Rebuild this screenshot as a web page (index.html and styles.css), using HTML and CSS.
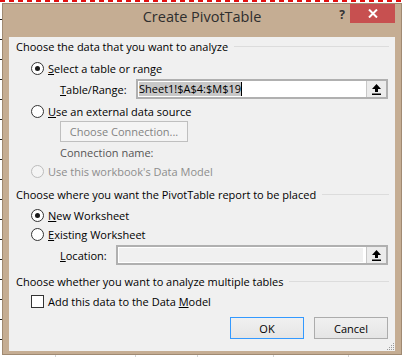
FILE: index.html
```html
<!DOCTYPE html>
<html lang="en">
  <head>
    <meta charset="UTF-8" />
    <title>Create PivotTable</title>
    <link rel="stylesheet" href="styles.css">
  </head>
  <body>
    <div class="sheet">
      <div class="window">
        <div class="titlebar">
          <span></span>
          <span class="title">Create PivotTable</span>
          <div class="caption-buttons">
            <span class="help">?</span>
            <span class="close">
              <svg width="10" height="9" viewBox="0 0 10 9"><path d="M1 0.5 L9 8.5 M9 0.5 L1 8.5" stroke="#fff" stroke-width="2"/></svg>
            </span>
          </div>
        </div>

        <div class="client">
          <!-- Source -->
          <div class="group-head mt4"><span>Choose the data that you want to analyze</span><i></i></div>
          <div class="option mt4"><span class="radio checked"></span><span><u>S</u>elect a table or range</span></div>
          <div class="field-row mt2">
            <span class="field-label w76"><u>T</u>able/Range:</span>
            <div class="ref-edit">
              <div class="ref-text"><span class="selected">Sheet1!$A$4:$M$19</span><span class="caret"></span></div>
              <span class="collapse-btn">
                <svg width="9" height="11" viewBox="0 0 9 11"><path d="M4.5 0 L9 5 L6 5 L6 8 L3 8 L3 5 L0 5 Z" fill="#000"/><rect x="0" y="9.5" width="9" height="1.5" fill="#000"/></svg>
              </span>
            </div>
          </div>
          <div class="option mt3"><span class="radio"></span><span><u>U</u>se an external data source</span></div>
          <div class="indent mt1"><button class="btn disabled w128">Choose Connection...</button></div>
          <div class="indent note mt2">Connection name:</div>
          <div class="option disabled"><span class="radio"></span><span>Use this workbook's Data Model</span></div>

          <!-- Destination -->
          <div class="group-head mt5"><span>Choose where you want the PivotTable report to be placed</span><i></i></div>
          <div class="option mt3"><span class="radio checked"></span><span><u>N</u>ew Worksheet</span></div>
          <div class="option mt1"><span class="radio"></span><span><u>E</u>xisting Worksheet</span></div>
          <div class="field-row mt2">
            <span class="field-label w56"><u>L</u>ocation:</span>
            <div class="ref-edit disabled">
              <div class="ref-text"></div>
              <span class="collapse-btn">
                <svg width="9" height="11" viewBox="0 0 9 11"><path d="M4.5 0 L9 5 L6 5 L6 8 L3 8 L3 5 L0 5 Z" fill="#000"/><rect x="0" y="9.5" width="9" height="1.5" fill="#000"/></svg>
              </span>
            </div>
          </div>

          <!-- Data model -->
          <div class="group-head mt7"><span>Choose whether you want to analyze multiple tables</span><i></i></div>
          <div class="option mt2"><span class="checkbox"></span><span>Add this data to the Data <u>M</u>odel</span></div>

          <div class="actions mt7">
            <button class="btn default">OK</button>
            <button class="btn">Cancel</button>
          </div>

          <svg class="grip" width="9" height="9" viewBox="0 0 9 9">
            <rect x="7" y="1" width="1" height="1" fill="#9a9a9a"/>
            <rect x="5" y="3" width="1" height="1" fill="#9a9a9a"/><rect x="7" y="3" width="1" height="1" fill="#9a9a9a"/>
            <rect x="3" y="5" width="1" height="1" fill="#9a9a9a"/><rect x="5" y="5" width="1" height="1" fill="#9a9a9a"/><rect x="7" y="5" width="1" height="1" fill="#9a9a9a"/>
            <rect x="1" y="7" width="1" height="1" fill="#9a9a9a"/><rect x="3" y="7" width="1" height="1" fill="#9a9a9a"/><rect x="5" y="7" width="1" height="1" fill="#9a9a9a"/><rect x="7" y="7" width="1" height="1" fill="#9a9a9a"/>
          </svg>
        </div>
      </div>
    </div>
  </body>
</html>
```

FILE: styles.css
```css
html, body {
  margin: 0;
  padding: 0;
  background: #fff;
}

/* spreadsheet behind the dialog: copy marquee, row ticks, column lines */
.sheet {
  width: 402px;
  height: 357px;
  overflow: hidden;
  padding-top: 3px;
  box-sizing: border-box;
  font-family: "Open Sans", sans-serif;
  font-size: 11px;
  color: #000;
  background:
    repeating-linear-gradient(90deg, #e01010 0 5px, #fff 5px 9px) top left / 100% 2px no-repeat,
    repeating-linear-gradient(180deg, #fff 0 19px, #222 19px 20px) top left / 2px 100% no-repeat,
    linear-gradient(90deg, transparent 55px, #d4d4d4 55px 56px, transparent 56px 135px, #d4d4d4 135px 136px, transparent 136px 197px, #d4d4d4 197px 198px, transparent 198px 273px, #d4d4d4 273px 274px, transparent 274px 348px, #d4d4d4 348px 349px, transparent 349px) bottom left / 100% 3px no-repeat,
    #fff;
}

/* Window frame */
.window {
  position: relative;
  margin-left: 2px;
  width: 400px;
  height: 352px;
  box-sizing: border-box;
  background: #c5ad93;
  border: 1px solid #a08a72;
  padding: 0 6px 7px 6px;
}

.titlebar {
  height: 29px;
  display: grid;
  grid-template-columns: 1fr auto 1fr;
  align-items: start;
}

.title {
  font-size: 14.5px;
  color: #2e2e2e;
  line-height: 20px;
  padding-top: 3px;
}

.caption-buttons {
  display: flex;
  justify-content: flex-end;
  align-items: flex-start;
}

.help {
  font-weight: bold;
  font-size: 12px;
  color: #333;
  margin-top: 2px;
  margin-right: 5px;
}

.close {
  width: 45px;
  height: 19px;
  background: #c75050;
  display: flex;
  align-items: center;
  justify-content: center;
}

/* Client area */
.client {
  position: relative;
  height: 314px;
  box-sizing: border-box;
  background: #f0f0f0;
  padding: 0 7px;
}

.mt1 { margin-top: 1px; }
.mt2 { margin-top: 2px; }
.mt3 { margin-top: 3px; }
.mt4 { margin-top: 4px; }
.mt5 { margin-top: 5px; }
.mt7 { margin-top: 7px; }

.group-head {
  height: 18px;
  display: flex;
  align-items: center;
  gap: 6px;
  margin-right: -1px;
}

.group-head i {
  flex: 1;
  height: 1px;
  background: #dcdcdc;
}

.option {
  height: 18px;
  display: flex;
  align-items: center;
  gap: 4px;
  margin-left: 15px;
}

.option.disabled {
  color: #8d8d8d;
}

.radio {
  width: 13px;
  height: 13px;
  box-sizing: border-box;
  border: 1px solid #333;
  border-radius: 50%;
  background: #fff;
  display: flex;
  align-items: center;
  justify-content: center;
}

.radio.checked::after {
  content: "";
  width: 5px;
  height: 5px;
  border-radius: 50%;
  background: #1a1a1a;
}

.option.disabled .radio {
  border-color: #bcbcbc;
  background: #f4f4f4;
}

.checkbox {
  width: 13px;
  height: 13px;
  box-sizing: border-box;
  border: 1px solid #333;
  background: #fff;
}

.indent {
  margin-left: 44px;
}

.note {
  height: 18px;
  line-height: 18px;
  color: #555;
}

.field-row {
  height: 20px;
  display: flex;
  align-items: center;
  margin-left: 44px;
}

.w76 { width: 76px; }
.w56 { width: 56px; }

.ref-edit {
  flex: 1;
  height: 20px;
  box-sizing: border-box;
  border: 2px solid #b0b0b0;
  background: #fff;
  display: flex;
}

.ref-text {
  flex: 1;
  display: flex;
  align-items: center;
  padding-left: 1px;
}

.selected {
  background: #c8c8c8;
  line-height: 14px;
}

.caret {
  width: 1px;
  height: 14px;
  background: #000;
}

.ref-edit.disabled .ref-text {
  background: #f0f0f0;
  margin: 1px 3px 1px 1px;
}

.collapse-btn {
  width: 19px;
  background: #ececec;
  border-left: 1px solid #c8c8c8;
  display: flex;
  align-items: center;
  justify-content: center;
}

/* Buttons */
.btn {
  height: 22px;
  width: 74px;
  box-sizing: border-box;
  font: inherit;
  color: #000;
  background: linear-gradient(#f0f0f0, #e5e5e5);
  border: 1px solid #acacac;
  padding: 0;
}

.btn.default {
  border-color: #3399ff;
}

.btn.disabled {
  height: 21px;
  color: #838383;
  background: #f4f4f4;
  border-color: #bfbfbf;
}

.w128 { width: 128px; }

.actions {
  display: flex;
  justify-content: flex-end;
  gap: 10px;
}

.grip {
  position: absolute;
  right: 0;
  bottom: 0;
}
```
